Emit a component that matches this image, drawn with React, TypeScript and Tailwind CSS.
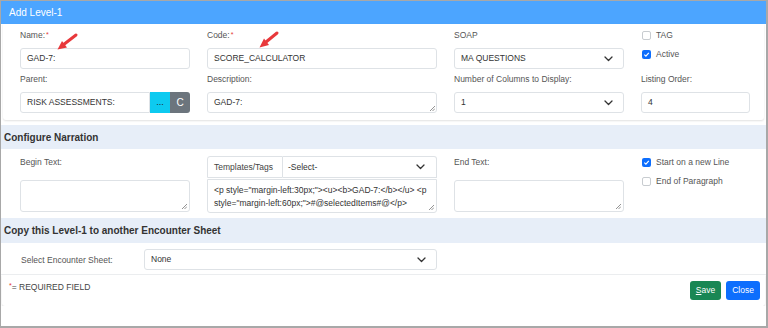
import React from "react";

const Chevron = () => (
  <svg width="9" height="6" viewBox="0 0 9 6" className="shrink-0">
    <path d="M1 1 L4.5 4.5 L8 1" fill="none" stroke="#333" strokeWidth="1.3" strokeLinecap="round" strokeLinejoin="round" />
  </svg>
);

const Grip = () => (
  <svg width="6" height="6" viewBox="0 0 6 6" className="absolute right-[2px] bottom-[2px]">
    <path d="M1 6 L6 1 M3.5 6 L6 3.5" stroke="#777" strokeWidth="0.8" />
  </svg>
);

const Check = ({ on }: { on: boolean }) =>
  on ? (
    <span className="w-[9px] h-[9px] rounded-[2px] bg-[#0d6efd] flex items-center justify-center shrink-0">
      <svg width="7" height="7" viewBox="0 0 7 7">
        <path d="M1.3 3.6 L2.9 5.1 L5.8 1.9" fill="none" stroke="white" strokeWidth="1.2" />
      </svg>
    </span>
  ) : (
    <span className="w-[9px] h-[9px] rounded-[2px] border border-[#c8ccd0] bg-white shrink-0" />
  );

const Label = ({ children, req }: { children: React.ReactNode; req?: boolean }) => (
  <div className="h-[12px] leading-[12px] mb-[7px] text-[8.5px] text-[#555]">
    {children}
    {req && <sup className="text-[#e53935] text-[7px] ml-[1px] relative top-[-1px]">*</sup>}
  </div>
);

const Input = ({ value, h = "h-[21px]" }: { value: string; h?: string }) => (
  <div className={`${h} border border-[#dee2e6] rounded-[3px] bg-white flex items-center pl-[6px] text-[8.5px] text-[#333]`}>
    {value}
  </div>
);

const Select = ({ value, cls = "" }: { value: string; cls?: string }) => (
  <div className={`h-[21px] border border-[#dee2e6] rounded-[3px] bg-white flex items-center justify-between pl-[6px] pr-[10px] text-[8.5px] text-[#333] ${cls}`}>
    <span>{value}</span>
    <Chevron />
  </div>
);

export default function App() {
  return (
    <div className="relative w-[768px] h-[328px] bg-[#a8a8a8] pt-[1px] pl-[1px] pr-[2px] pb-[2px] font-['Liberation_Sans',Arial,sans-serif]">
      <div className="h-full bg-white flex flex-col">
        {/* header */}
        <div className="h-[23px] bg-[#4ca5ff] text-white text-[10px] flex items-center pl-[8px]">Add Level-1</div>

        {/* card 1 */}
        <div className="h-[96px] bg-white mx-[2px] rounded-b-[3px] shadow-[0_1px_2px_rgba(0,0,0,0.12)] pt-[5px] pl-[17px]">
          <div className="grid grid-cols-[170px_230px_170px_109px] gap-x-[17px] gap-y-[4px]">
            <div>
              <Label req>Name:</Label>
              <Input value="GAD-7:" />
            </div>
            <div>
              <Label req>Code:</Label>
              <Input value="SCORE_CALCULATOR" />
            </div>
            <div>
              <Label>SOAP</Label>
              <Select value="MA QUESTIONS" />
            </div>
            <div className="pl-[1px] text-[8.5px] text-[#555]">
              <div className="h-[12px] flex items-center gap-[5px]">
                <Check on={false} />
                <span>TAG</span>
              </div>
              <div className="h-[12px] mt-[7px] flex items-center gap-[5px]">
                <Check on={true} />
                <span>Active</span>
              </div>
            </div>

            <div>
              <Label>Parent:</Label>
              <div className="h-[21px] flex">
                <div className="flex-1 border border-[#dee2e6] rounded-l-[3px] flex items-center pl-[6px] text-[8.5px] text-[#333]">RISK ASSESSMENTS:</div>
                <div className="w-[20px] bg-[#0dcaf0] flex items-center justify-center text-[9px] text-[#222]">...</div>
                <div className="w-[20px] bg-[#6c757d] rounded-r-[3px] flex items-center justify-center text-[10px] text-white">C</div>
              </div>
            </div>
            <div>
              <Label>Description:</Label>
              <div className="relative">
                <Input value="GAD-7:" />
                <Grip />
              </div>
            </div>
            <div>
              <Label>Number of Columns to Display:</Label>
              <Select value="1" />
            </div>
            <div>
              <Label>Listing Order:</Label>
              <Input value="4" />
            </div>
          </div>
        </div>

        {/* band 1 */}
        <div className="mt-[5px] h-[24px] bg-[#e7eef8] flex items-center pl-[3px] text-[10px] font-bold text-[#333]">Configure Narration</div>

        {/* narration */}
        <div className="h-[69px] pt-[7px] pl-[19px]">
          <div className="grid grid-cols-[170px_230px_170px_109px] gap-x-[17px]">
            <div>
              <div className="h-[12px] leading-[12px] text-[8.5px] text-[#555]">Begin Text:</div>
              <div className="relative mt-[12px] h-[32px] border border-[#dee2e6] rounded-[3px]">
                <Grip />
              </div>
            </div>
            <div>
              <div className="h-[22px] flex">
                <div className="w-[76px] border border-[#dee2e6] rounded-tl-[3px] flex items-center pl-[6px] text-[8.5px] text-[#444] bg-white">Templates/Tags</div>
                <div className="flex-1 border border-l-0 border-[#dee2e6] rounded-tr-[3px] flex items-center justify-between pl-[5px] pr-[11px] text-[8.5px] text-[#333]">
                  <span>-Select-</span>
                  <Chevron />
                </div>
              </div>
              <div className="relative mt-[1px] h-[34px] border border-[#dee2e6] rounded-b-[3px] pl-[6px] pt-[4px] text-[8.5px] leading-[13px] text-[#333]">
                <div>&lt;p style="margin-left:30px;"&gt;&lt;u&gt;&lt;b&gt;GAD-7:&lt;/b&gt;&lt;/u&gt; &lt;p</div>
                <div>style="margin-left:60px;"&gt;#@selectedItems#@&lt;/p&gt;</div>
                <Grip />
              </div>
            </div>
            <div>
              <div className="h-[12px] leading-[12px] text-[8.5px] text-[#555]">End Text:</div>
              <div className="relative mt-[12px] h-[32px] border border-[#dee2e6] rounded-[3px]">
                <Grip />
              </div>
            </div>
            <div className="pl-[1px] text-[8.5px] text-[#555]">
              <div className="h-[12px] flex items-center gap-[5px]">
                <Check on={true} />
                <span>Start on a new Line</span>
              </div>
              <div className="h-[12px] mt-[7px] flex items-center gap-[5px]">
                <Check on={false} />
                <span>End of Paragraph</span>
              </div>
            </div>
          </div>
        </div>

        {/* band 2 */}
        <div className="h-[25px] bg-[#e7eef8] flex items-center pl-[3px] text-[10px] font-bold text-[#333]">Copy this Level-1 to another Encounter Sheet</div>

        {/* encounter */}
        <div className="h-[32px] flex items-start pt-[6px] pl-[19px] border-b border-[#eceef0]">
          <div className="w-[124px] h-[20px] flex items-center pl-[1px] pt-[3px] text-[8.5px] text-[#555]">Select Encounter Sheet:</div>
          <Select value="None" cls="w-[293px] h-[20px]" />
        </div>

        {/* footer */}
        <div className="h-[31px] mx-[1px] rounded-b-[3px] shadow-[0_1px_2px_rgba(0,0,0,0.12)] flex justify-between items-start pt-[6px] pl-[7px] pr-[5px]">
          <div className="h-[12px] leading-[12px] text-[8.5px] text-[#444]">
            <span className="text-[#e53935] text-[7px] relative top-[-2px]">*</span>= REQUIRED FIELD
          </div>
          <div className="flex gap-[5px]">
            <div className="w-[31px] h-[19px] rounded-[3px] bg-[#198754] text-white text-[8.5px] flex items-center justify-center">
              <span><span className="underline">S</span>ave</span>
            </div>
            <div className="w-[34px] h-[19px] rounded-[3px] bg-[#0d6efd] text-white text-[8.5px] flex items-center justify-center">Close</div>
          </div>
        </div>
        <div className="flex-1 bg-white" />
      </div>

      {/* annotation arrows */}
      <svg className="absolute inset-0 pointer-events-none" width="768" height="328" viewBox="0 0 768 328">
        <line x1="76" y1="35" x2="64" y2="44.3" stroke="#e8383b" strokeWidth="3" strokeLinecap="round" />
        <polygon points="57.5,49.5 67,47.5 62,41" fill="#e8383b" />
        <line x1="277" y1="33" x2="266" y2="42" stroke="#e8383b" strokeWidth="3" strokeLinecap="round" />
        <polygon points="259.5,47.5 269,45 264,38.5" fill="#e8383b" />
      </svg>
    </div>
  );
}
